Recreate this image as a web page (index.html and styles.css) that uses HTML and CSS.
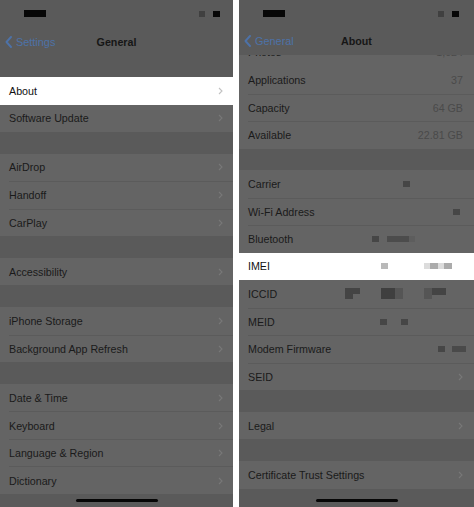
FILE: index.html
```html
<!DOCTYPE html>
<html>
  <head>
    <meta charset="UTF-8" />
    <title>General / About</title>
    <link rel="stylesheet" href="styles.css">
  </head>
  <body>
    <div class="screens">
      <div class="phone left">
        <div class="status">
          <span class="clock"></span>
          <span class="icons"><i class="sig"></i><i class="bat"></i></span>
        </div>
        <div class="nav">
          <span class="back">
            <svg width="7" height="12" viewBox="0 0 7 12"><polyline points="6,1 1.5,6 6,11" /></svg>
            Settings
          </span>
          <span class="title">General</span>
          <span></span>
        </div>
        <div class="gap top"></div>
        <div class="group">
          <div class="row active"><div class="cell"><span>About</span><svg class="chev" width="5" height="8" viewBox="0 0 5 8"><polyline points="1,1 4,4 1,7" /></svg></div></div>
          <div class="row"><div class="cell"><span>Software Update</span><svg class="chev" width="5" height="8" viewBox="0 0 5 8"><polyline points="1,1 4,4 1,7" /></svg></div></div>
        </div>
        <div class="gap"></div>
        <div class="group">
          <div class="row"><div class="cell"><span>AirDrop</span><svg class="chev" width="5" height="8" viewBox="0 0 5 8"><polyline points="1,1 4,4 1,7" /></svg></div></div>
          <div class="row"><div class="cell"><span>Handoff</span><svg class="chev" width="5" height="8" viewBox="0 0 5 8"><polyline points="1,1 4,4 1,7" /></svg></div></div>
          <div class="row"><div class="cell"><span>CarPlay</span><svg class="chev" width="5" height="8" viewBox="0 0 5 8"><polyline points="1,1 4,4 1,7" /></svg></div></div>
        </div>
        <div class="gap"></div>
        <div class="group">
          <div class="row"><div class="cell"><span>Accessibility</span><svg class="chev" width="5" height="8" viewBox="0 0 5 8"><polyline points="1,1 4,4 1,7" /></svg></div></div>
        </div>
        <div class="gap"></div>
        <div class="group">
          <div class="row"><div class="cell"><span>iPhone Storage</span><svg class="chev" width="5" height="8" viewBox="0 0 5 8"><polyline points="1,1 4,4 1,7" /></svg></div></div>
          <div class="row"><div class="cell"><span>Background App Refresh</span><svg class="chev" width="5" height="8" viewBox="0 0 5 8"><polyline points="1,1 4,4 1,7" /></svg></div></div>
        </div>
        <div class="gap"></div>
        <div class="group">
          <div class="row"><div class="cell"><span>Date &amp; Time</span><svg class="chev" width="5" height="8" viewBox="0 0 5 8"><polyline points="1,1 4,4 1,7" /></svg></div></div>
          <div class="row"><div class="cell"><span>Keyboard</span><svg class="chev" width="5" height="8" viewBox="0 0 5 8"><polyline points="1,1 4,4 1,7" /></svg></div></div>
          <div class="row"><div class="cell"><span>Language &amp; Region</span><svg class="chev" width="5" height="8" viewBox="0 0 5 8"><polyline points="1,1 4,4 1,7" /></svg></div></div>
          <div class="row"><div class="cell"><span>Dictionary</span><svg class="chev" width="5" height="8" viewBox="0 0 5 8"><polyline points="1,1 4,4 1,7" /></svg></div></div>
        </div>
        <div class="footer"><span class="home-bar"></span></div>
      </div>

      <div class="phone right">
        <div class="status">
          <span class="clock"></span>
          <span class="icons"><i class="sig"></i><i class="bat"></i></span>
        </div>
        <div class="nav short">
          <span class="back">
            <svg width="7" height="12" viewBox="0 0 7 12"><polyline points="6,1 1.5,6 6,11" /></svg>
            General
          </span>
          <span class="title">About</span>
          <span></span>
        </div>
        <div class="peek">
          <div class="row"><div class="cell"><span>Photos</span><span class="value">1,024</span></div></div>
        </div>
        <div class="group">
          <div class="row"><div class="cell"><span>Applications</span><span class="value">37</span></div></div>
          <div class="row"><div class="cell"><span>Capacity</span><span class="value">64 GB</span></div></div>
          <div class="row"><div class="cell"><span>Available</span><span class="value">22.81 GB</span></div></div>
        </div>
        <div class="gap"></div>
        <div class="group">
          <div class="row"><div class="cell"><span>Carrier</span>
            <span class="blur carrier"><i class="b7"></i></span></div></div>
          <div class="row"><div class="cell"><span>Wi-Fi Address</span>
            <span class="blur wifi"><i class="b7"></i></span></div></div>
          <div class="row"><div class="cell"><span>Bluetooth</span>
            <span class="blur bt"><i class="b7"></i><i class="bar"></i><i class="fade"></i></span></div></div>
          <div class="row active"><div class="cell"><span>IMEI</span>
            <span class="blur imei"><i class="b7 lite"></i><i class="l1"></i><i class="l2"></i><i class="l1"></i><i class="l2"></i></span></div></div>
          <div class="row"><div class="cell"><span>ICCID</span>
            <span class="blur iccid">
              <i class="t8"></i><i class="t7"></i>
              <i class="t14 s2"></i><i class="t8 pale"></i>
              <i class="t8 pale s2"></i><i class="t14 half"></i>
            </span></div></div>
          <div class="row"><div class="cell"><span>MEID</span>
            <span class="blur meid"><i class="b7"></i><i class="b7 s3"></i></span></div></div>
          <div class="row"><div class="cell"><span>Modem Firmware</span>
            <span class="blur modem"><i class="b7"></i><i class="bar short"></i></span></div></div>
          <div class="row"><div class="cell"><span>SEID</span><svg class="chev" width="5" height="8" viewBox="0 0 5 8"><polyline points="1,1 4,4 1,7" /></svg></div></div>
        </div>
        <div class="gap"></div>
        <div class="group">
          <div class="row"><div class="cell"><span>Legal</span><svg class="chev" width="5" height="8" viewBox="0 0 5 8"><polyline points="1,1 4,4 1,7" /></svg></div></div>
        </div>
        <div class="gap"></div>
        <div class="group">
          <div class="row"><div class="cell"><span>Certificate Trust Settings</span><svg class="chev" width="5" height="8" viewBox="0 0 5 8"><polyline points="1,1 4,4 1,7" /></svg></div></div>
        </div>
        <div class="footer tall"><span class="home-bar"></span></div>
      </div>
    </div>
  </body>
</html>
```

FILE: styles.css
```css
body {
  margin: 0;
  background-color: white;
  font-family: "Liberation Sans", Arial, sans-serif;
  font-size: 10.7px;
  color: #1a1a1a;
}

.screens {
  display: flex;
  gap: 6px;
  width: 474px;
  height: 507px;
}

.phone {
  background-color: #5a5a5a;
  overflow: hidden;
  display: flex;
  flex-direction: column;
  height: 507px;
}
.phone.left {
  width: 233px;
}
.phone.right {
  width: 235px;
}

/* status bar */
.status {
  height: 27px;
  flex: none;
  display: flex;
  align-items: flex-start;
  padding: 10px 13px 0 24px;
  box-sizing: border-box;
}
.clock {
  width: 22px;
  height: 7px;
  background-color: #070707;
}
.icons {
  margin-left: auto;
  margin-top: 1px;
  display: flex;
  gap: 8px;
}
.icons i {
  display: block;
  width: 6px;
  height: 6px;
}
.sig {
  background-color: #404040;
}
.bat {
  width: 7px !important;
  background-color: #070707;
}
.right .status {
  padding-right: 15px;
}

/* navigation bar */
.nav {
  height: 29px;
  flex: none;
  display: grid;
  grid-template-columns: 1fr auto 1fr;
  align-items: center;
}
.nav.short {
  height: 28px;
}
.back {
  display: flex;
  align-items: center;
  gap: 4px;
  padding-left: 5px;
  color: #4d72a8;
  font-size: 10.9px;
  white-space: nowrap;
}
.back svg polyline {
  fill: none;
  stroke: #4d72a8;
  stroke-width: 1.9;
  stroke-linecap: round;
  stroke-linejoin: round;
}
.title {
  font-weight: bold;
  color: #161616;
}

/* list */
.gap {
  height: 21.7px;
  flex: none;
}
.gap.top {
  height: 21px;
}

.group {
  flex: none;
  background-color: #646464;
}

.row {
  height: 27.5px;
  padding-left: 9px;
  box-sizing: border-box;
  display: flex;
}
.cell {
  flex: 1;
  display: flex;
  align-items: center;
  justify-content: space-between;
  padding-right: 10px;
  border-top: 1px solid #5b5b5b;
}
.row:first-child .cell {
  border-top: none;
}
.right .cell {
  padding-right: 11px;
}

.row.active {
  background-color: white;
  color: #111;
}
.row.active .cell,
.row.active + .row .cell {
  border-top: none;
}

.chev polyline {
  fill: none;
  stroke: #787878;
  stroke-width: 1.1;
}
.active .chev polyline {
  stroke: #c2c2c2;
}

.value {
  color: #4a4a4a;
}

/* row hidden under the navigation bar */
.peek {
  height: 11px;
  flex: none;
  overflow: hidden;
  background-color: #646464;
}
.peek .row {
  margin-top: -16.5px;
}

/* blurred serial numbers */
.blur {
  display: flex;
  align-items: center;
}
.blur i {
  display: block;
  height: 6px;
  background-color: #464646;
}
.b7 {
  width: 7px;
}
.carrier {
  margin-right: 53px;
}
.wifi {
  margin-right: 3px;
}
.bt {
  margin-right: 48px;
}
.bt .bar {
  width: 22px;
  margin-left: 8px;
  background-color: #4c4c4c;
}
.bt .fade {
  width: 6px;
  background-color: #5d5d5d;
}
.imei {
  margin-right: 11px;
}
.imei .lite {
  background-color: #b9b9b9;
  margin-right: 36px;
}
.imei .l1 {
  width: 6px;
  background-color: #dcdcdc;
}
.imei .l2 {
  width: 8px;
  background-color: #ababab;
}
.iccid {
  margin-right: 17px;
  align-items: flex-start;
  height: 11px;
}
.iccid i {
  height: 11px;
  background-color: #444;
}
.iccid .t8 {
  width: 8px;
}
.iccid .t7 {
  width: 7px;
  height: 6px;
}
.iccid .t14 {
  width: 14px;
  background-color: #3f3f3f;
}
.iccid .pale {
  background-color: #555;
}
.iccid .half {
  height: 7px;
  background-color: #444;
}
.iccid .s2 {
  margin-left: 21px;
}
.meid {
  margin-right: 55px;
}
.meid .s3 {
  margin-left: 14px;
}
.modem {
  margin-right: -3px;
}
.modem .bar {
  width: 14px;
  margin-left: 7px;
  background-color: #4a4a4a;
}

/* home indicator */
.footer {
  flex: 1;
  display: flex;
  justify-content: center;
  padding-top: 5px;
}
.footer.tall {
  padding-top: 10px;
}
.home-bar {
  width: 82px;
  height: 3px;
  border-radius: 2px;
  background-color: #060606;
}
```
